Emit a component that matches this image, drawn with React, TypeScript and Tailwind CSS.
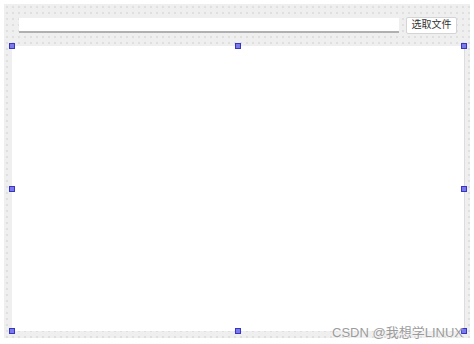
import React from 'react';

const handle = 'absolute w-[6px] h-[6px] border border-[#3535c8] bg-[#7a7ae8] -translate-x-1/2 -translate-y-1/2';

/**
 * Form preview as seen in the designer: path field, pick button and an empty area
 */
export default function App() {
  return (
    <div className="relative w-[474px] h-[344px] bg-white pl-[4px] pr-[4px] pt-[4px] pb-[6px] font-['Liberation_Sans','Noto_Sans_CJK_SC',sans-serif]">
      <div className="relative h-full flex flex-col bg-[#efefef] bg-[radial-gradient(circle,#cdcdcd_0.6px,transparent_0.8px)] bg-size-[6px_6px]">
        {/* top row */}
        <div className="flex items-center h-[42px] pl-[15px] pr-[13px] gap-[7px]">
          <div className="flex-1 h-[15px] bg-white border-b-2 border-[#b0b0b0]" />
          <button className="w-[51px] h-[17px] bg-white border border-[#d4d4d4] rounded-[2px] text-[10px] leading-none text-[#333]">
            选取文件
          </button>
        </div>

        {/* main area */}
        <div className="relative ml-[8px] mr-[5px] h-[285px] bg-white border-r border-[#dcdcdc]">
          <span className={`${handle} left-0 top-0`} />
          <span className={`${handle} left-1/2 top-0`} />
          <span className={`${handle} left-full top-0`} />
          <span className={`${handle} left-0 top-1/2`} />
          <span className={`${handle} left-full top-1/2`} />
          <span className={`${handle} left-0 top-full`} />
          <span className={`${handle} left-1/2 top-full`} />
          <span className={`${handle} left-full top-full`} />
        </div>
      </div>

      <div className="absolute right-[11px] bottom-[5px] text-[13px] leading-none text-[#9c9c9c] [text-shadow:0_0_2px_#fff]">
        CSDN @我想学LINUX
      </div>
    </div>
  );
}
